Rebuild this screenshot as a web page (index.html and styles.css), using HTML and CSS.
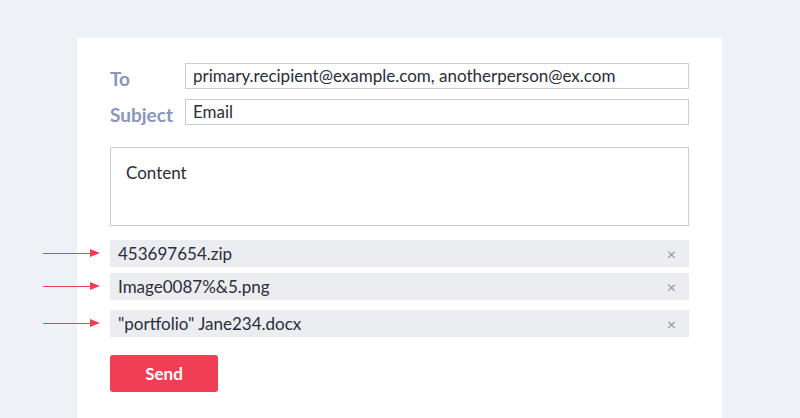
FILE: index.html
```html
<!DOCTYPE html>
<html lang="en">
<head>
  <meta charset="UTF-8">
  <title>Compose</title>
  <link rel="stylesheet" href="styles.css">
</head>
<body>
  <div class="card">
    <div class="field">
      <label class="field-label">To</label>
      <div class="field-input">primary.recipient@example.com, anotherperson@ex.com</div>
    </div>
    <div class="field">
      <label class="field-label">Subject</label>
      <div class="field-input">Email</div>
    </div>
    <div class="content-box">Content</div>

    <div class="attachments">
      <div class="attachment">
        <span class="arrow"></span>
        <span class="attachment-name">453697654.zip</span>
        <span class="attachment-remove">&times;</span>
      </div>
      <div class="attachment">
        <span class="arrow"></span>
        <span class="attachment-name">Image0087%&amp;5.png</span>
        <span class="attachment-remove">&times;</span>
      </div>
      <div class="attachment third">
        <span class="arrow"></span>
        <span class="attachment-name">"portfolio" Jane234.docx</span>
        <span class="attachment-remove">&times;</span>
      </div>
    </div>

    <button class="send">Send</button>
  </div>
</body>
</html>
```
FILE: styles.css
```css
body {
  margin: 0;
  background: #eef1f5;
  font-family: Lato, "Noto Sans", sans-serif;
  color: #2a2d3a;
}
.card {
  margin: 38px 0 0 77px;
  width: 645px;
  height: 380px;
  box-sizing: border-box;
  background: #fff;
  padding: 25px 33px 0 33px;
}
.field {
  display: flex;
  align-items: flex-end;
  margin-bottom: 10px;
}
.field-label {
  width: 75px;
  font-size: 19px;
  font-weight: bold;
  color: #8a95bb;
  line-height: 20px;
  margin-bottom: 0;
}
.field-input {
  flex: 1;
  height: 26px;
  box-sizing: border-box;
  border: 1px solid #c9cdd9;
  padding: 0 7px;
  font-size: 17px;
  line-height: 23px;
}
.content-box {
  margin-top: 22px;
  height: 79px;
  box-sizing: border-box;
  border: 1px solid #c9cdd9;
  padding: 14px 15px;
  font-size: 17px;
}
.attachments {
  margin-top: 14px;
}
.attachment {
  position: relative;
  display: flex;
  align-items: center;
  height: 27px;
  background: #ecedf1;
  padding: 0 13px 0 8px;
  font-size: 17px;
  margin-bottom: 6px;
}
.attachment.third {
  margin-top: 10px;
}
.attachment-name {
  flex: 1;
}
.attachment-remove {
  color: #8d93a8;
  font-size: 16px;
}
.arrow {
  position: absolute;
  right: 100%;
  top: 13px;
  margin-right: 20px;
  width: 47px;
  height: 1px;
  background: #f03e55;
}
.arrow::after {
  content: "";
  position: absolute;
  left: 100%;
  top: -4px;
  border-left: 10px solid #f03e55;
  border-top: 4.5px solid transparent;
  border-bottom: 4.5px solid transparent;
}
.send {
  margin-top: 12px;
  width: 108px;
  height: 37px;
  border: none;
  border-radius: 3px;
  background: #f03e55;
  color: #fff;
  font-family: Lato, "Noto Sans", sans-serif;
  font-size: 17px;
  font-weight: bold;
}
```
